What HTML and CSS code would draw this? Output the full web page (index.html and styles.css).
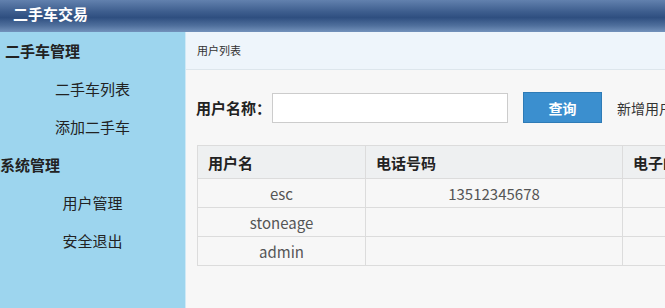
FILE: index.html
```html
<!DOCTYPE html>
<html lang="zh-CN">
<head>
    <meta charset="UTF-8">
    <meta name="viewport" content="width=device-width, initial-scale=1.0">
    <title>用户列表</title>
    <link rel="stylesheet" href="styles.css">
</head>
<body>

    <div class="top">二手车交易</div>

    <div class="wrap">
        <div class="side">
            <div class="side-title">二手车管理</div>
            <div class="side-item">二手车列表</div>
            <div class="side-item">添加二手车</div>
            <div class="side-title sys">系统管理</div>
            <div class="side-item">用户管理</div>
            <div class="side-item">安全退出</div>
        </div>

        <div class="main">
            <div class="crumb">用户列表</div>

            <div class="search">
                <label for="userName">用户名称：</label>
                <input type="text" id="userName">
                <button id="searchBtn">查询</button>
                <span class="add-link">新增用户</span>
            </div>

            <table class="user-table">
                <thead>
                    <tr>
                        <th class="c1">用户名</th>
                        <th class="c2">电话号码</th>
                        <th>电子邮箱</th>
                    </tr>
                </thead>
                <tbody>
                    <tr><td>esc</td><td>13512345678</td><td></td></tr>
                    <tr><td>stoneage</td><td></td><td></td></tr>
                    <tr><td>admin</td><td></td><td></td></tr>
                </tbody>
            </table>
        </div>
    </div>

</body>
</html>
```

FILE: styles.css
```css
html, body {
    margin: 0;
    height: 100%;
    overflow: hidden;
}
body {
    font-family: "Noto Sans CJK SC", "Noto Sans", sans-serif;
    color: #333;
    display: flex;
    flex-direction: column;
}
.top {
    height: 32px;
    line-height: 28px;
    padding-left: 13px;
    color: #fff;
    font-size: 15px;
    font-weight: bold;
    background: linear-gradient(#6281ae, #3f5f8f 35%, #2f4f80 55%, #4f6f9c 80%, #7392bb);
}
.wrap {
    flex: 1;
    display: flex;
}
.side {
    width: 185px;
    flex-shrink: 0;
    background-color: #9dd5ee;
    font-size: 15px;
    color: #222;
}
.side-title {
    height: 38px;
    line-height: 38px;
    padding-left: 5px;
    font-weight: bold;
}
.side-title.sys {
    padding-left: 0;
}
.side-item {
    height: 38px;
    line-height: 38px;
    text-align: center;
}
.main {
    flex: 1;
    border-left: 1px solid #cfe9f6;
    background-color: #f7f7f7;
    overflow: hidden;
}
.crumb {
    height: 37px;
    line-height: 37px;
    padding-left: 11px;
    font-size: 11px;
    background-color: #eef5fb;
    border-bottom: 1px solid #dde6ec;
}
.search {
    display: flex;
    align-items: center;
    padding: 22px 0 0 10px;
    white-space: nowrap;
    height: 31px;
}
.search label {
    font-size: 15px;
    font-weight: bold;
    color: #222;
    width: 76px;
    flex-shrink: 0;
}
.search input {
    width: 234px;
    height: 28px;
    flex-shrink: 0;
    border: 1px solid #ccc;
    background: #fff;
    padding: 0;
    margin: 0;
}
.search button {
    width: 79px;
    height: 31px;
    flex-shrink: 0;
    margin-left: 15px;
    background-color: #3b8fcf;
    border: 1px solid #2e7bb6;
    color: #fff;
    font-size: 14px;
    font-weight: bold;
    font-family: inherit;
}
.add-link {
    margin-left: 15px;
    font-size: 14px;
}
.user-table {
    margin: 22px 0 0 11px;
    width: 600px;
    border-collapse: collapse;
    font-size: 15px;
}
.user-table th, .user-table td {
    border: 1px solid #dcdcdc;
    padding: 0;
}
.user-table th {
    height: 32px;
    text-align: left;
    padding-left: 10px;
    background-color: #eef0f1;
    color: #222;
}
.user-table td {
    height: 28px;
    text-align: center;
    color: #555;
}
.user-table .c1 {
    width: 157px;
}
.user-table .c2 {
    width: 246px;
}
```
